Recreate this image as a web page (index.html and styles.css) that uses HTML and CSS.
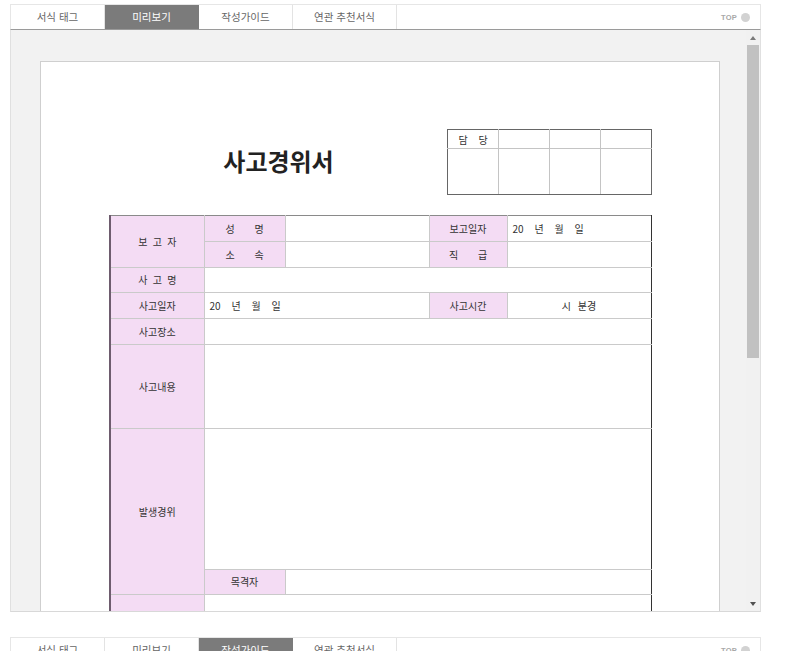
FILE: index.html
```html
<!DOCTYPE html>
<html lang="ko">
<head>
<meta charset="utf-8">
<title>사고경위서</title>
<link rel="stylesheet" href="styles.css">
</head>
<body>
<div class="wrap">
  <section class="panel">
    <div class="tabbar">
      <div class="tab t1">서식 태그</div>
      <div class="tab t2 active">미리보기</div>
      <div class="tab t3">작성가이드</div>
      <div class="tab t4">연관 추천서식</div>
      <div class="top"><span class="top-txt">TOP</span><span class="top-dot"></span></div>
    </div>
    <div class="content">
      <div class="viewport">
        <div class="paper">
          <div class="doc-head">
            <h1 class="title">사고경위서</h1>
            <table class="approve">
              <colgroup><col class="ac1"><col class="ac2"><col class="ac3"><col class="ac4"></colgroup>
              <tr class="ar1"><td class="sp-dam">담 당</td><td></td><td></td><td></td></tr>
              <tr class="ar2"><td></td><td></td><td></td><td></td></tr>
            </table>
          </div>
          <table class="form">
            <colgroup><col class="c1"><col class="c2"><col class="c3"><col class="c4"><col class="c5"></colgroup>
            <tr class="r26 first">
              <td class="lbl edge sp3" rowspan="2">보 고 자</td>
              <td class="lbl sp2">성 명</td>
              <td></td>
              <td class="lbl">보고일자</td>
              <td class="val sp-date">20 년 월 일</td>
            </tr>
            <tr class="r26">
              <td class="lbl sp2">소 속</td>
              <td></td>
              <td class="lbl sp2">직 급</td>
              <td></td>
            </tr>
            <tr class="r25">
              <td class="lbl edge sp3">사 고 명</td>
              <td colspan="4"></td>
            </tr>
            <tr class="r26">
              <td class="lbl edge">사고일자</td>
              <td class="val sp-date" colspan="2">20 년 월 일</td>
              <td class="lbl">사고시간</td>
              <td class="ctr sp-time">시 분경</td>
            </tr>
            <tr class="r26">
              <td class="lbl edge">사고장소</td>
              <td colspan="4"></td>
            </tr>
            <tr class="r84">
              <td class="lbl edge">사고내용</td>
              <td colspan="4"></td>
            </tr>
            <tr class="r141">
              <td class="lbl edge" rowspan="2">발생경위</td>
              <td colspan="4"></td>
            </tr>
            <tr class="r25">
              <td class="lbl">목격자</td>
              <td colspan="3"></td>
            </tr>
            <tr class="r60">
              <td class="lbl edge"></td>
              <td colspan="4"></td>
            </tr>
          </table>
        </div>
      </div>
      <div class="scrollbar">
        <div class="sb-btn"><span class="arr-up"></span></div>
        <div class="sb-thumb"></div>
        <div class="sb-track"></div>
        <div class="sb-btn"><span class="arr-down"></span></div>
      </div>
    </div>
  </section>

  <section class="panel panel2">
    <div class="tabbar">
      <div class="tab t1">서식 태그</div>
      <div class="tab t2">미리보기</div>
      <div class="tab t3 active">작성가이드</div>
      <div class="tab t4">연관 추천서식</div>
      <div class="top"><span class="top-txt">TOP</span><span class="top-dot"></span></div>
    </div>
  </section>
</div>
</body>
</html>
```

FILE: styles.css
```css
html, body {
  margin: 0;
  padding: 0;
  background: #fff;
  height: 651px;
  overflow: hidden;
  font-family: "Noto Sans CJK KR", "Noto Sans", sans-serif;
  color: #333;
}

.wrap {
  padding: 4px 0 0 10px;
  width: 751px;
}

.panel {
  width: 751px;
  box-sizing: border-box;
}

.panel2 {
  margin-top: 25px;
}

.tabbar {
  display: flex;
  height: 26px;
  box-sizing: border-box;
  border-top: 1px solid #e6e6e6;
  border-left: 1px solid #e6e6e6;
  border-right: 1px solid #e6e6e6;
  border-bottom: 1px solid #9a9a9a;
  background: #fff;
}

.tab {
  display: flex;
  align-items: center;
  justify-content: center;
  font-size: 10.5px;
  color: #666;
  border-right: 1px solid #e3e3e3;
  box-sizing: border-box;
  line-height: 1;
}

.t1 { width: 94px; }
.t2 { width: 94px; }
.t3 { width: 94px; }
.t4 { width: 104px; }

.tab.active {
  background: #7b7b7b;
  color: #fff;
  border-right-color: #7b7b7b;
}

.top {
  margin-left: auto;
  display: flex;
  align-items: center;
  gap: 4px;
  padding-right: 10px;
}

.top-txt {
  font-family: "Liberation Sans", Arial, sans-serif;
  font-size: 7.5px;
  font-weight: bold;
  color: #a8a8a8;
  letter-spacing: 0.2px;
}

.top-dot {
  width: 9px;
  height: 9px;
  border-radius: 50%;
  background: #d2d2d2;
}

.content {
  display: flex;
  height: 582px;
  box-sizing: border-box;
  border-left: 1px solid #e0e0e0;
  border-right: 1px solid #e0e0e0;
  border-bottom: 1px solid #d8d8d8;
  background: #f2f2f2;
}

.viewport {
  flex: 1;
  overflow: hidden;
  padding: 31px 0 0 29px;
}

.paper {
  width: 680px;
  height: 700px;
  box-sizing: border-box;
  border: 1px solid #cfcfcf;
  background: #fff;
  padding: 67px 67px 0 68px;
}

.doc-head {
  display: flex;
  align-items: center;
  margin-bottom: 20px;
  padding-left: 1px;
}

.title {
  flex: 1;
  margin: 0;
  text-align: center;
  font-size: 24px;
  line-height: 30px;
  font-weight: bold;
  color: #222;
  padding-bottom: 3px;
}

.approve {
  border-collapse: collapse;
  table-layout: fixed;
  width: 204px;
  border: 1px solid #666;
}

.ac1, .ac2, .ac3, .ac4 { width: 51px; }

.approve td {
  border: 1px solid #c4c4c4;
  padding: 0;
  font-size: 10px;
  text-align: center;
  color: #333;
}

.approve tr.ar1 { height: 19px; }
.approve tr.ar2 { height: 46px; }

.approve tr:first-child td { border-top-color: #666; }
.approve tr td:first-child { border-left-color: #666; }
.approve tr td:last-child { border-right-color: #666; }
.approve tr:last-child td { border-bottom-color: #666; }

.sp-dam { word-spacing: 8px; }

.form {
  border-collapse: collapse;
  table-layout: fixed;
  width: 541px;
}

.c1 { width: 94px; }
.c2 { width: 81px; }
.c3 { width: 144px; }
.c4 { width: 78px; }
.c5 { width: 144px; }

.form td {
  border: 1px solid #cacaca;
  padding: 0;
  font-size: 10px;
  line-height: 1;
  color: #333;
}

.form tr.first td { border-top: 1px solid #8a8a8a; }
.form td.edge { border-left: 2px solid #6e5c6e; }
.form tr td:last-child { border-right: 1px solid #333; }

.form .lbl {
  background: #f4dcf4;
  text-align: center;
}

.form .val {
  padding-left: 5px;
}

.form .ctr {
  text-align: center;
}

.sp2 { word-spacing: 17px; }
.sp3 { word-spacing: 2.5px; }
.sp-date { word-spacing: 8px; }
.sp-time { word-spacing: 4px; }

.r25 { height: 25px; }
.r26 { height: 26px; }
.r84 { height: 84px; }
.r141 { height: 141px; }
.r60 { height: 60px; }

.scrollbar {
  width: 14px;
  display: flex;
  flex-direction: column;
  background: #f1f1f1;
}

.sb-btn {
  height: 15px;
  display: flex;
  align-items: center;
  justify-content: center;
}

.arr-up {
  width: 0;
  height: 0;
  border-left: 3.5px solid transparent;
  border-right: 3.5px solid transparent;
  border-bottom: 4px solid #7a7a7a;
}

.arr-down {
  width: 0;
  height: 0;
  border-left: 3.5px solid transparent;
  border-right: 3.5px solid transparent;
  border-top: 4px solid #505050;
}

.sb-thumb {
  height: 313px;
  margin: 0 1px;
  background: #c1c1c1;
}

.sb-track {
  flex: 1;
}
```
